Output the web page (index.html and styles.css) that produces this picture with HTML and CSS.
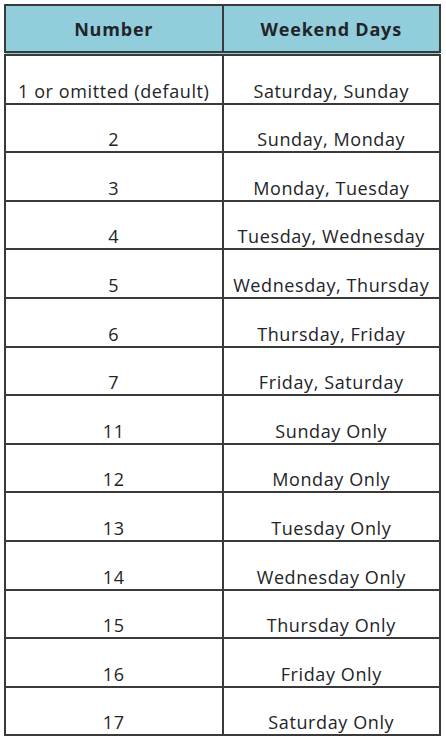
FILE: index.html
```html
<!DOCTYPE html>
<html>
<head>
<meta charset="utf-8">
<link rel="stylesheet" href="styles.css">
</head>
<body>
<table class="days">
  <thead>
    <tr><th>Number</th><th>Weekend Days</th></tr>
  </thead>
  <tbody>
    <tr><td>1 or omitted (default)</td><td>Saturday, Sunday</td></tr>
    <tr><td>2</td><td>Sunday, Monday</td></tr>
    <tr><td>3</td><td>Monday, Tuesday</td></tr>
    <tr><td>4</td><td>Tuesday, Wednesday</td></tr>
    <tr><td>5</td><td>Wednesday, Thursday</td></tr>
    <tr><td>6</td><td>Thursday, Friday</td></tr>
    <tr><td>7</td><td>Friday, Saturday</td></tr>
    <tr><td>11</td><td>Sunday Only</td></tr>
    <tr><td>12</td><td>Monday Only</td></tr>
    <tr><td>13</td><td>Tuesday Only</td></tr>
    <tr><td>14</td><td>Wednesday Only</td></tr>
    <tr><td>15</td><td>Thursday Only</td></tr>
    <tr><td>16</td><td>Friday Only</td></tr>
    <tr><td>17</td><td>Saturday Only</td></tr>
  </tbody>
</table>
</body>
</html>
```

FILE: styles.css
```css
html, body {
  margin: 0;
  padding: 0;
  background: #ffffff;
}
body {
  padding: 4px 0 0 4px;
  font-family: "Open Sans", "Liberation Sans", sans-serif;
  color: #222428;
}
.days {
  border-collapse: collapse;
  width: 437px;
  table-layout: fixed;
}
.days th, .days td {
  width: 50%;
  border: 2px solid #3a3a3a;
  text-align: center;
  padding: 0;
  white-space: nowrap;
}
.days th {
  background: #92cddc;
  font-weight: 700;
  font-size: 18px;
  letter-spacing: 0.8px;
  height: 45px;
  border-bottom: 5px double #3a3a3a;
  vertical-align: middle;
}
.days td {
  height: 44.6px;
  font-size: 18px;
  letter-spacing: 0.6px;
  vertical-align: bottom;
  padding-bottom: 2px;
  line-height: 20px;
}
```
